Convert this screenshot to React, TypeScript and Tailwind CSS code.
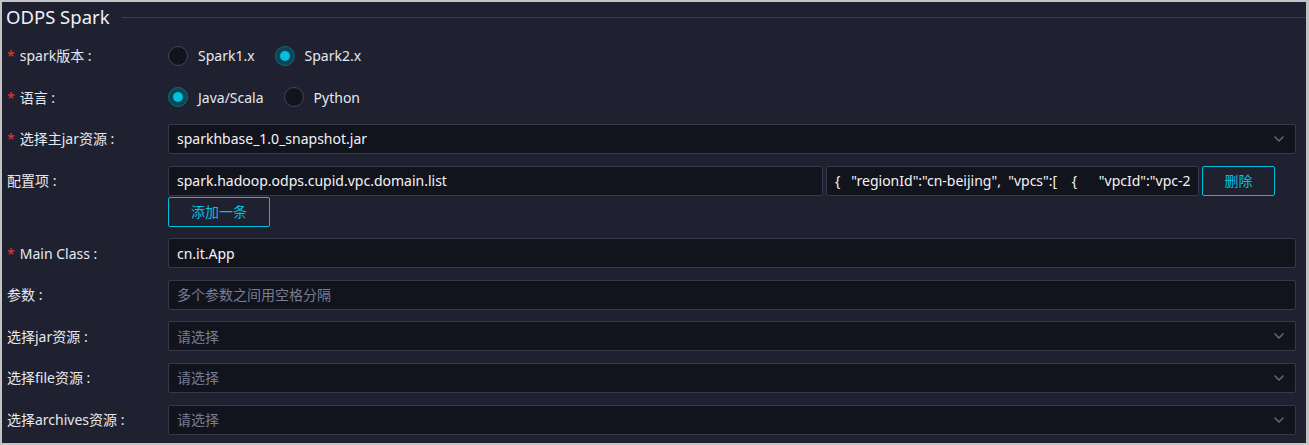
import { ChevronDown } from "lucide-react";

const FONT = { fontFamily: '"Noto Sans", "Noto Sans CJK SC", sans-serif' };

function Label({ text, required }: { text: string; required?: boolean }) {
  return (
    <div className="flex h-[30px] w-[166px] shrink-0 items-center pl-[5px] text-[14px] text-[#e6e8ef]">
      {required ? <span className="mr-[5px] text-[#f0323c]">*</span> : null}
      <span>{text}</span>
    </div>
  );
}

function Radio({ label, checked }: { label: string; checked?: boolean }) {
  return (
    <label className="flex items-center gap-[10px] text-[14px] text-[#e6e8ef]">
      {checked ? (
        <span className="flex h-[20px] w-[20px] items-center justify-center rounded-full border border-[#0f6b7d] bg-[#0b4656]">
          <span className="h-[10px] w-[10px] rounded-full bg-[#00c1de]" />
        </span>
      ) : (
        <span className="h-[20px] w-[20px] rounded-full border border-[#42465a] bg-[#12141d]" />
      )}
      <span>{label}</span>
    </label>
  );
}

function Field({
  value,
  placeholder,
  select,
  className = "",
}: {
  value?: string;
  placeholder?: string;
  select?: boolean;
  className?: string;
}) {
  return (
    <div
      className={`flex h-[30px] items-center overflow-hidden rounded-[2px] border border-[#353949] bg-[#12141d] pl-[8px] pr-[8px] text-[14px] ${className}`}
    >
      <span className={`flex-1 overflow-hidden whitespace-pre ${value ? "text-[#f2f3f7]" : "text-[#767c95]"}`}>
        {value ?? placeholder}
      </span>
      {select ? <ChevronDown className="h-[16px] w-[16px] shrink-0 text-[#5d6380]" strokeWidth={2.5} /> : null}
    </div>
  );
}

function Row({ label, required, children }: { label: string; required?: boolean; children: React.ReactNode }) {
  return (
    <div className="flex items-start">
      <Label text={label} required={required} />
      <div className="flex-1 pr-[10px]">{children}</div>
    </div>
  );
}

export default function App() {
  return (
    <div className="h-[445px] w-[1309px] bg-[#c4c4c4] pt-[2px] pl-[2px] pr-[3px] pb-[2px]" style={FONT}>
      <div className="flex h-full flex-col bg-[#1f2130]">
        <div className="mb-[8.8px] flex h-[30px] items-center gap-[12px] pl-[4px]">
          <span className="text-[18.5px] leading-none text-[#eef0f6]">ODPS Spark</span>
          <div className="h-px flex-1 bg-[#3b3e51]" />
        </div>
        <div className="flex flex-col gap-[11.6px]">
          <Row label="spark版本 :" required>
            <div className="flex h-[30px] items-center gap-[20px]">
              <Radio label="Spark1.x" />
              <Radio label="Spark2.x" checked />
            </div>
          </Row>
          <Row label="语言 :" required>
            <div className="flex h-[30px] items-center gap-[20px]">
              <Radio label="Java/Scala" checked />
              <Radio label="Python" />
            </div>
          </Row>
          <Row label="选择主jar资源 :" required>
            <Field value="sparkhbase_1.0_snapshot.jar" select />
          </Row>
          <Row label="配置项 :">
            <div className="flex flex-col gap-[1px]">
              <div className="flex gap-[3px]">
                <Field value="spark.hadoop.odps.cupid.vpc.domain.list" className="w-[655px] shrink-0" />
                <Field
                  value={'{   "regionId":"cn-beijing",  "vpcs":[    {      "vpcId":"vpc-2zeaeq21mb1dmkqh0exox",'}
                  className="w-[373px] shrink-0 pr-0"
                />
                <button className="h-[30px] w-[73px] shrink-0 rounded-[2px] border border-[#00c1de] text-[14px] text-[#00c1de]">
                  删除
                </button>
              </div>
              <button className="h-[30px] w-[102px] rounded-[2px] border border-[#00c1de] text-[14px] text-[#00c1de]">
                添加一条
              </button>
            </div>
          </Row>
          <Row label="Main Class :" required>
            <Field value="cn.it.App" />
          </Row>
          <Row label="参数 :">
            <Field placeholder="多个参数之间用空格分隔" />
          </Row>
          <Row label="选择jar资源 :">
            <Field placeholder="请选择" select />
          </Row>
          <Row label="选择file资源 :">
            <Field placeholder="请选择" select />
          </Row>
          <Row label="选择archives资源 :">
            <Field placeholder="请选择" select />
          </Row>
        </div>
      </div>
    </div>
  );
}
